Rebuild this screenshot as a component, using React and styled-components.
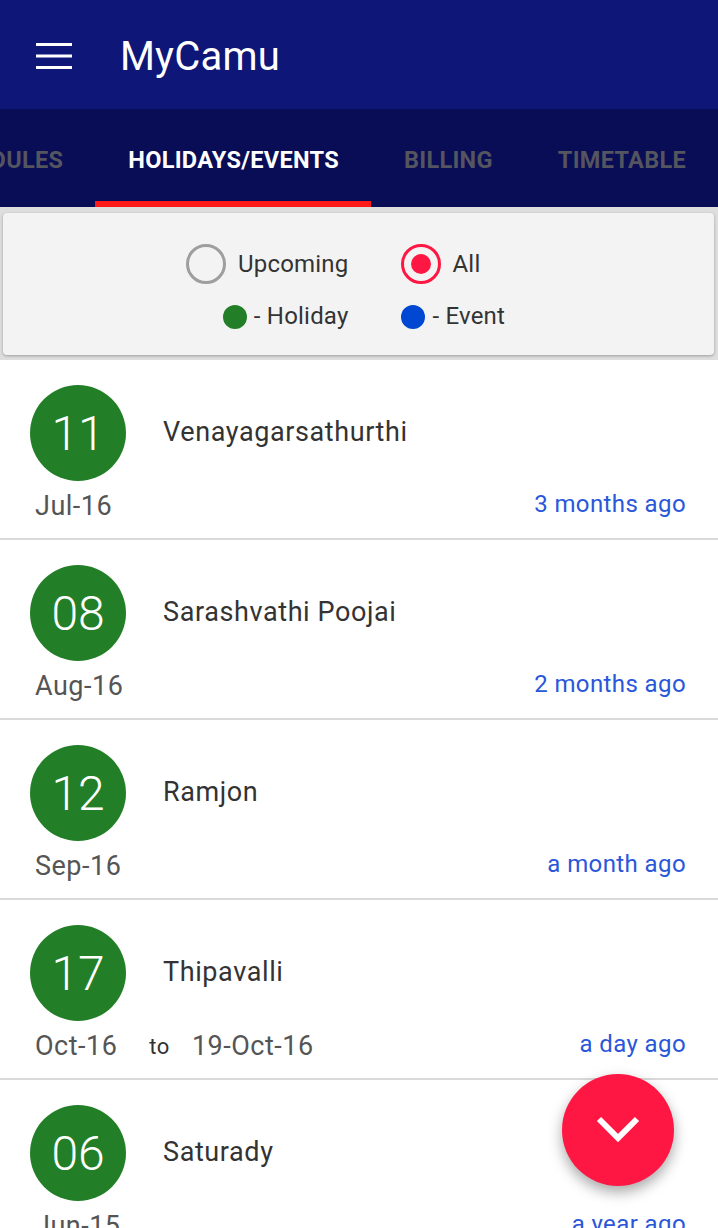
import styled, { createGlobalStyle } from 'styled-components'

const GlobalStyle = createGlobalStyle`
  html, body {
    margin: 0;
    padding: 0;
    background: #ffffff;
    font-family: Roboto, 'Noto Sans', sans-serif;
  }
`

const Page = styled.div`
  width: 100%;
  height: 100vh;
  overflow: hidden;
  display: flex;
  flex-direction: column;
`

const AppBar = styled.header`
  height: 109px;
  flex-shrink: 0;
  background: #0e1677;
  display: flex;
  align-items: center;
  padding-left: 36px;
  gap: 48px;
`

const MenuIcon = styled.svg`
  display: block;
  margin-top: 2px;
`

const AppTitle = styled.h1`
  margin: 4px 0 0 0;
  font-size: 40px;
  font-weight: 400;
  color: #ffffff;
  letter-spacing: 0.2px;
`

const TabBar = styled.nav`
  height: 98px;
  flex-shrink: 0;
  background: #080d56;
  display: flex;
  justify-content: flex-end;
  overflow: hidden;
`

const Tab = styled.div`
  flex-shrink: 0;
  display: flex;
  align-items: center;
  padding: 10px 32px 0 33px;
  font-size: 23.5px;
  font-weight: 700;
  letter-spacing: 0.3px;
  color: ${p => (p.active ? '#ffffff' : '#55555f')};
  border-bottom: 6px solid ${p => (p.active ? '#ff1a1a' : 'transparent')};
`

const FilterArea = styled.div`
  flex-shrink: 0;
  background: #dedede;
  padding: 6px 4px 5px 3px;
`

const FilterCard = styled.div`
  height: 142px;
  box-sizing: border-box;
  background: #f3f3f3;
  border-radius: 4px;
  box-shadow: 0 1px 3px rgba(0, 0, 0, 0.3);
  display: grid;
  grid-template-columns: 1fr 1fr;
  grid-template-rows: 52px 52px;
  column-gap: 52px;
  align-content: center;
  padding: 12px 0 0 32px;
`

const Cell = styled.div`
  display: flex;
  align-items: center;
  justify-content: ${p => (p.right ? 'flex-start' : 'flex-end')};
  gap: ${p => p.gap || 12}px;
  font-size: 24px;
  letter-spacing: 0.2px;
  color: #333333;
`

const Radio = styled.span`
  width: 40px;
  height: 40px;
  box-sizing: border-box;
  border-radius: 50%;
  border: 3px solid ${p => (p.checked ? '#ff1744' : '#9e9e9e')};
  display: flex;
  align-items: center;
  justify-content: center;
  &::after {
    content: '';
    width: 20px;
    height: 20px;
    border-radius: 50%;
    background: ${p => (p.checked ? '#ff1744' : 'transparent')};
  }
`

const Dot = styled.span`
  width: 24px;
  height: 24px;
  border-radius: 50%;
  background: ${p => p.color};
  margin-top: 2px;
`

const List = styled.div`
  background: #ffffff;
`

const Row = styled.div`
  height: 180px;
  box-sizing: border-box;
  border-bottom: 2px solid #dadada;
  padding: 25px 32px 0 30px;
  display: flex;
  flex-direction: column;
`

const TopLine = styled.div`
  display: flex;
  align-items: center;
  gap: 37px;
`

const DayBadge = styled.div`
  width: 96px;
  height: 96px;
  border-radius: 50%;
  background: ${p => (p.kind === 'event' ? '#0047d1' : '#237f27')};
  color: #ffffff;
  font-size: 48px;
  font-weight: 300;
  display: flex;
  align-items: center;
  justify-content: center;
  flex-shrink: 0;
`

const Title = styled.div`
  font-size: 27px;
  letter-spacing: 0.6px;
  color: #333333;
  margin-top: -2px;
`

const BottomLine = styled.div`
  display: flex;
  align-items: center;
  justify-content: space-between;
  margin-top: 9px;
  padding-left: 5px;
`

const DateRange = styled.div`
  display: flex;
  align-items: center;
  font-size: 27px;
  letter-spacing: 0.5px;
  color: #555555;
`

const To = styled.span`
  font-size: 22px;
  color: #333333;
  margin: 0 22px 0 32px;
`

const Ago = styled.div`
  font-size: 24px;
  letter-spacing: 0.4px;
  color: #2a57da;
  margin-top: -4px;
`

const Fab = styled.button`
  position: fixed;
  right: 44px;
  bottom: 42px;
  width: 112px;
  height: 112px;
  border-radius: 50%;
  border: none;
  background: #ff1744;
  box-shadow: 0 6px 14px rgba(0, 0, 0, 0.35);
  display: flex;
  align-items: center;
  justify-content: center;
  padding: 0;
`

const items = [
  { day: '11', month: 'Jul-16', title: 'Venayagarsathurthi', ago: '3 months ago' },
  { day: '08', month: 'Aug-16', title: 'Sarashvathi Poojai', ago: '2 months ago' },
  { day: '12', month: 'Sep-16', title: 'Ramjon', ago: 'a month ago' },
  { day: '17', month: 'Oct-16', to: '19-Oct-16', title: 'Thipavalli', ago: 'a day ago' },
  { day: '06', month: 'Jun-15', title: 'Saturady', ago: 'a year ago' },
]

export default function App() {
  return (
    <Page>
      <GlobalStyle />
      <AppBar>
        <MenuIcon width="36" height="26" viewBox="0 0 36 26">
          <rect x="0" y="0" width="36" height="3" fill="#fff" />
          <rect x="0" y="11.5" width="36" height="3" fill="#fff" />
          <rect x="0" y="23" width="36" height="3" fill="#fff" />
        </MenuIcon>
        <AppTitle>MyCamu</AppTitle>
      </AppBar>

      <TabBar>
        <Tab>SCHEDULES</Tab>
        <Tab active>HOLIDAYS/EVENTS</Tab>
        <Tab>BILLING</Tab>
        <Tab>TIMETABLE</Tab>
      </TabBar>

      <FilterArea>
        <FilterCard>
          <Cell>
            <Radio />
            <span>Upcoming</span>
          </Cell>
          <Cell right>
            <Radio checked />
            <span>All</span>
          </Cell>
          <Cell gap={7}>
            <Dot color="#237f27" />
            <span>- Holiday</span>
          </Cell>
          <Cell right gap={8}>
            <Dot color="#0047d1" />
            <span>- Event</span>
          </Cell>
        </FilterCard>
      </FilterArea>

      <List>
        {items.map(item => (
          <Row key={item.title}>
            <TopLine>
              <DayBadge kind="holiday">{item.day}</DayBadge>
              <Title>{item.title}</Title>
            </TopLine>
            <BottomLine>
              <DateRange>
                <span>{item.month}</span>
                {item.to && (
                  <>
                    <To>to</To>
                    <span>{item.to}</span>
                  </>
                )}
              </DateRange>
              <Ago>{item.ago}</Ago>
            </BottomLine>
          </Row>
        ))}
      </List>

      <Fab aria-label="more">
        <svg width="48" height="48" viewBox="0 0 48 48">
          <path d="M5 13 L24 32 L43 13" fill="none" stroke="#fff" strokeWidth="6" />
        </svg>
      </Fab>
    </Page>
  )
}
